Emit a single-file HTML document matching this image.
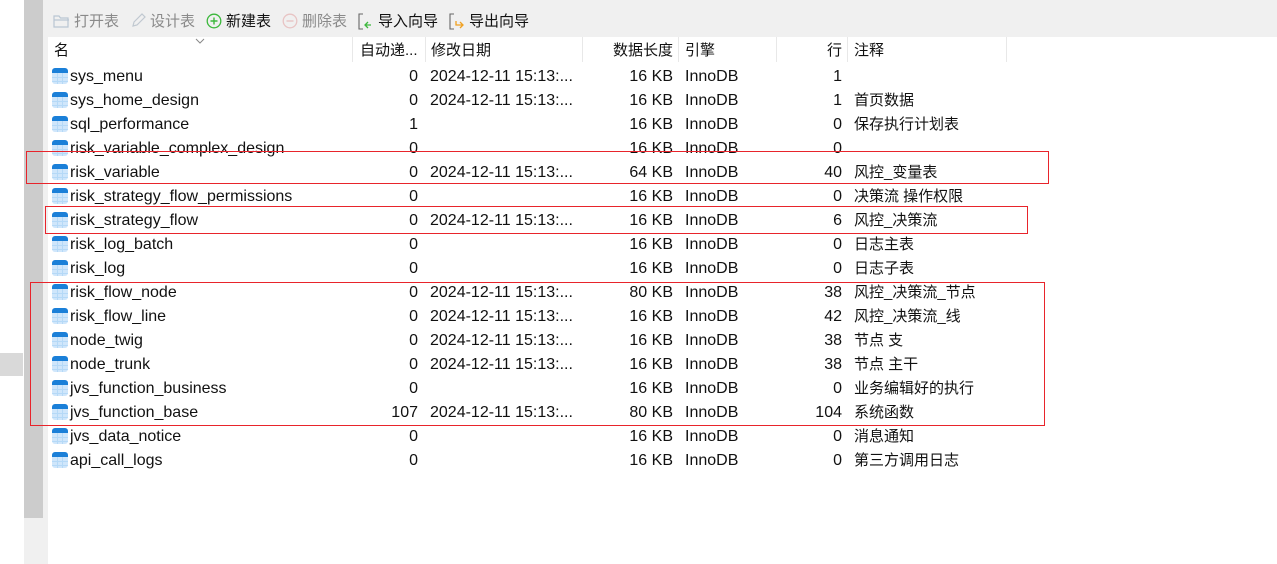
<!DOCTYPE html>
<html><head><meta charset="utf-8"><style>
*{margin:0;padding:0;box-sizing:border-box}
body{width:1277px;height:564px;overflow:hidden;background:#fff;position:relative;font-family:"Liberation Sans","Noto Sans CJK SC",sans-serif;font-size:16px;color:#111}
.abs{position:absolute}
.tb{left:43px;top:0;width:1234px;height:37px;background:#f0f0f0}
.ti{position:absolute;top:12px;font-size:15px;line-height:20px;white-space:nowrap}
.hd{position:absolute;top:38px;height:25px;line-height:25px;font-size:15px;white-space:nowrap}
.sep{position:absolute;top:37px;width:1px;height:25px;background:#e8e8e8}
.row{position:absolute;left:48px;height:24px;line-height:24px;width:1229px;white-space:nowrap}
.row span{position:absolute;top:0}
.row span.cm{font-size:15px}
.ic{position:absolute;left:4px;top:3px;width:16px;height:16px;border-radius:3px;background:linear-gradient(#1a7fd8 0 5px,#cfe6fb 5px);overflow:hidden}
.ic:after{content:"";position:absolute;left:0;top:5px;width:16px;height:11px;background:linear-gradient(90deg,transparent 5px,#b5d9f7 5px 6px,transparent 6px 10px,#b5d9f7 10px 11px,transparent 11px),linear-gradient(transparent 4px,#b5d9f7 4px 5px,transparent 5px 8px,#b5d9f7 8px 9px,transparent 9px)}
.r{text-align:right}
.box{position:absolute;border:1px solid #e8242b}
</style></head><body>
<div class="abs" style="left:24px;top:0;width:19px;height:518px;background:#cccccc"></div>
<div class="abs" style="left:24px;top:518px;width:24px;height:46px;background:#f0f0f0"></div>
<div class="abs" style="left:43px;top:37px;width:5px;height:481px;background:#f0f0f0"></div>
<div class="abs" style="left:0;top:353px;width:23px;height:23px;background:#d9d9d9"></div>
<div class="abs tb"></div>
<svg class="abs" style="left:53px;top:14px" width="17" height="15" viewBox="0 0 17 15"><path d="M1 2h5l1.5 2H15v9H1z M1 6h15" fill="none" stroke="#b9c6d3" stroke-width="1.2"/></svg>
<div class="ti" style="left:74px;color:#8a8a8a">打开表</div>
<svg class="abs" style="left:130px;top:13px" width="16" height="16" viewBox="0 0 16 16"><path d="M3 13l1-4 8-8 3 3-8 8z" fill="none" stroke="#c0c8d0" stroke-width="1.2"/></svg>
<div class="ti" style="left:150px;color:#8a8a8a">设计表</div>
<svg class="abs" style="left:206px;top:13px" width="16" height="16" viewBox="0 0 16 16"><circle cx="8" cy="8" r="6.8" fill="none" stroke="#3cb83c" stroke-width="1.3"/><path d="M8 4.5v7M4.5 8h7" stroke="#3cb83c" stroke-width="1.4"/></svg>
<div class="ti" style="left:226px;color:#111">新建表</div>
<svg class="abs" style="left:282px;top:13px" width="16" height="16" viewBox="0 0 16 16"><circle cx="8" cy="8" r="6.8" fill="none" stroke="#e8c4c4" stroke-width="1.3"/><path d="M4.5 8h7" stroke="#e8c4c4" stroke-width="1.4"/></svg>
<div class="ti" style="left:302px;color:#8a8a8a">删除表</div>
<svg class="abs" style="left:358px;top:13px" width="17" height="17" viewBox="0 0 17 17"><path d="M5 1H1v15h4" fill="none" stroke="#666" stroke-width="1.1"/><path d="M13 12H8M10 9l-3 3 3 3" fill="none" stroke="#3cb83c" stroke-width="1.3"/></svg>
<div class="ti" style="left:378px">导入向导</div>
<svg class="abs" style="left:449px;top:13px" width="17" height="17" viewBox="0 0 17 17"><path d="M5 1H1v15h4" fill="none" stroke="#666" stroke-width="1.1"/><path d="M7 8v4h7M11 9l3 3-3 3" fill="none" stroke="#f0a020" stroke-width="1.3"/></svg>
<div class="ti" style="left:469px">导出向导</div>

<div class="abs" style="left:48px;top:37px;width:1229px;height:25px;background:#fff"></div>
<div class="sep" style="left:352px"></div><div class="sep" style="left:425px"></div><div class="sep" style="left:582px"></div><div class="sep" style="left:678px"></div><div class="sep" style="left:776px"></div><div class="sep" style="left:847px"></div><div class="sep" style="left:1006px"></div>
<svg class="abs" style="left:195px;top:38px" width="10" height="6"><path d="M1 1l4 4 4-4" fill="none" stroke="#888"/></svg>
<div class="hd" style="left:54px">名</div>
<div class="hd" style="left:360px">自动递...</div>
<div class="hd" style="left:431px">修改日期</div>
<div class="hd" style="left:613px">数据长度</div>
<div class="hd" style="left:685px">引擎</div>
<div class="hd" style="left:827px">行</div>
<div class="hd" style="left:854px">注释</div>

<div id="rows"></div>
<script>
var d=[["sys_menu","0",1,"16 KB","1",""],["sys_home_design","0",1,"16 KB","1","首页数据"],["sql_performance","1",0,"16 KB","0","保存执行计划表"],["risk_variable_complex_design","0",0,"16 KB","0",""],["risk_variable","0",1,"64 KB","40","风控_变量表"],["risk_strategy_flow_permissions","0",0,"16 KB","0","决策流 操作权限"],["risk_strategy_flow","0",1,"16 KB","6","风控_决策流"],["risk_log_batch","0",0,"16 KB","0","日志主表"],["risk_log","0",0,"16 KB","0","日志子表"],["risk_flow_node","0",1,"80 KB","38","风控_决策流_节点"],["risk_flow_line","0",1,"16 KB","42","风控_决策流_线"],["node_twig","0",1,"16 KB","38","节点 支"],["node_trunk","0",1,"16 KB","38","节点 主干"],["jvs_function_business","0",0,"16 KB","0","业务编辑好的执行"],["jvs_function_base","107",1,"80 KB","104","系统函数"],["jvs_data_notice","0",0,"16 KB","0","消息通知"],["api_call_logs","0",0,"16 KB","0","第三方调用日志"]];
var h="";d.forEach(function(r,i){var t=65+i*24;h+='<div class="row" style="top:'+t+'px"><i class="ic"></i><span style="left:22px">'+r[0]+'</span><span class="r" style="left:300px;width:70px">'+r[1]+'</span>'+(r[2]?'<span style="left:382px">2024-12-11 15:13:...</span>':'')+'<span class="r" style="left:545px;width:80px">'+r[3]+'</span><span style="left:637px">InnoDB</span><span class="r" style="left:744px;width:50px">'+r[4]+'</span><span class="cm" style="left:806px">'+r[5]+'</span></div>'});document.getElementById("rows").innerHTML=h;
</script>
<div class="box" style="left:26px;top:151px;width:1023px;height:33px"></div>
<div class="box" style="left:45px;top:206px;width:983px;height:28px"></div>
<div class="box" style="left:30px;top:282px;width:1015px;height:144px"></div>
</body></html>
